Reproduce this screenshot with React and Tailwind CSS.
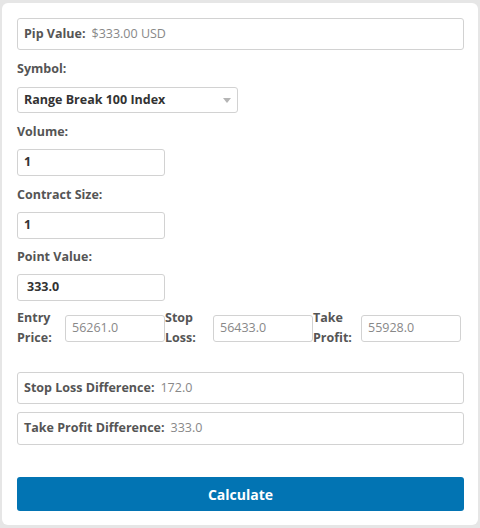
import React from "react";

const font = { fontFamily: '"Open Sans", "Liberation Sans", sans-serif' };

function Label({ children }) {
  return <div className="h-5 leading-5 text-[12.5px] font-bold text-[#555]">{children}</div>;
}

function Input({ value }) {
  return (
    <div className="w-[148px] h-[27px] border border-[#d2d2d2] rounded-[3px] flex items-center px-[6px] text-[12.5px] font-bold text-[#333]">
      {value}
    </div>
  );
}

function TriField({ l1, l2, value }) {
  return (
    <div className="flex items-center w-[148px]">
      <div className="w-[48px] text-[12.5px] font-bold text-[#555] leading-5">
        <div>{l1}</div>
        <div>{l2}</div>
      </div>
      <div className="flex-1 h-[27px] border border-[#d2d2d2] rounded-[3px] flex items-center px-[6px] text-[12.5px] text-[#888]">
        {value}
      </div>
    </div>
  );
}

function InfoBox({ label, value, h = "h-[32px]" }) {
  return (
    <div className={`${h} border border-[#d2d2d2] rounded-[3px] flex items-center px-[6px] text-[12.5px]`}>
      <span className="font-bold text-[#555]">{label}</span>
      <span className="ml-[6px] text-[#888]">{value}</span>
    </div>
  );
}

export default function App() {
  return (
    <div className="w-[480px] h-[528px] bg-[#e6e6e6] pt-[3px] pl-[2px]" style={font}>
      <div className="w-[476px] h-[522px] bg-white rounded-[6px] pl-[15px] pr-[14px] pt-[15px]">
        <InfoBox label="Pip Value:" value="$333.00 USD" />
        <div className="mt-[9px]">
          <Label>Symbol:</Label>
          <div className="mt-2 w-[221px] h-[26px] border border-[#d2d2d2] rounded-[3px] flex items-center justify-between pl-[6px] pr-[6px] text-[12.5px] font-bold text-[#333]">
            <span>Range Break 100 Index</span>
            <svg width="8" height="5" viewBox="0 0 8 5"><path d="M0 0h8L4 5z" fill="#b5b5b5" /></svg>
          </div>
        </div>
        <div className="mt-[9px]">
          <Label>Volume:</Label>
          <div className="mt-[7px]"><Input value="1" /></div>
        </div>
        <div className="mt-[9px]">
          <Label>Contract Size:</Label>
          <div className="mt-[7px]"><Input value="1" /></div>
        </div>
        <div className="mt-[8px]">
          <Label>Point Value:</Label>
          <div className="mt-[7px]"><Input value={<span className="pl-[3px]">333.0</span>} /></div>
        </div>
        <div className="mt-[7px] flex">
          <TriField l1="Entry" l2="Price:" value="56261.0" />
          <TriField l1="Stop" l2="Loss:" value="56433.0" />
          <TriField l1="Take" l2="Profit:" value="55928.0" />
        </div>
        <div className="mt-[24px] flex flex-col gap-2">
          <InfoBox label="Stop Loss Difference:" value="172.0" />
          <InfoBox label="Take Profit Difference:" value="333.0" h="h-[33px]" />
        </div>
        <button className="mt-8 w-full h-[34px] bg-[#0274b3] rounded-[3px] text-white font-bold text-[14px]">
          Calculate
        </button>
      </div>
    </div>
  );
}
